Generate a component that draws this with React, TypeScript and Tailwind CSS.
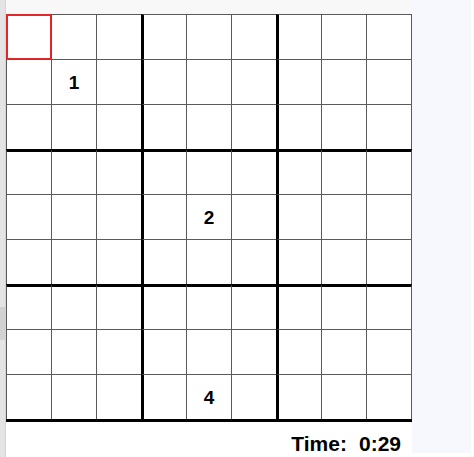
import React from "react";

// puzzle givens, keyed by "row-col"
const GIVENS: Record<string, number> = {
  "1-1": 1,
  "4-4": 2,
  "8-4": 4,
};

const SELECTED = { row: 0, col: 0 };

function Cell({ row, col }: { row: number; col: number }) {
  const value = GIVENS[`${row}-${col}`];
  const thickLeft = col === 3 || col === 6;
  const thickTop = row === 3 || row === 6;
  const isLastCol = col === 8;
  const isSelected = row === SELECTED.row && col === SELECTED.col;

  return (
    <div
      className={`relative box-border flex h-full items-center justify-center ${
        thickLeft ? "border-l-[3px] border-l-black" : "border-l border-l-[#5a5a5a]"
      } ${thickTop ? "border-t-[3px] border-t-black" : "border-t border-t-[#5a5a5a]"} ${
        isLastCol ? "w-[46px] border-r border-r-[#5a5a5a]" : "w-[45px]"
      }`}
    >
      {value !== undefined && (
        <span className="text-[19px] font-bold leading-none text-black">{value}</span>
      )}
      {/* selection outline sits over the grid lines */}
      {isSelected && (
        <div className="absolute left-[-1px] top-[-1px] h-[46px] w-[46px] border-2 border-[#e3262a]" />
      )}
    </div>
  );
}

function Board() {
  return (
    <div className="box-border flex w-[406px] flex-col border-b-[3px] border-b-black bg-white">
      {Array.from({ length: 9 }, (_, row) => (
        <div key={row} className="flex h-[45px]">
          {Array.from({ length: 9 }, (_, col) => (
            <Cell key={col} row={row} col={col} />
          ))}
        </div>
      ))}
    </div>
  );
}

export default function App() {
  return (
    <div
      className="flex h-[457px] w-[474px] overflow-hidden bg-white text-black"
      style={{ fontFamily: '"Liberation Sans", Arial, sans-serif' }}
    >
      {/* left scroll gutter */}
      <div className="flex w-[6px] shrink-0 flex-col border-r border-r-[#d4d4d4] bg-[#e4e4e4]">
        <div className="h-[307px]" />
        <div className="h-[33px] bg-[#d2d2d2]" />
      </div>

      <div className="flex w-[406px] shrink-0 flex-col">
        <div className="h-[14px] bg-[#f8f8f8]" />
        <Board />
        <div className="flex flex-1 items-start justify-end gap-[12px] pr-[11px] pt-[11px] text-[21px] font-bold leading-none">
          <span>Time:</span>
          <span>0:29</span>
        </div>
      </div>

      {/* side panel */}
      <div className="h-[453px] w-[59px] shrink-0 bg-[#f7f8fd]" />
    </div>
  );
}
